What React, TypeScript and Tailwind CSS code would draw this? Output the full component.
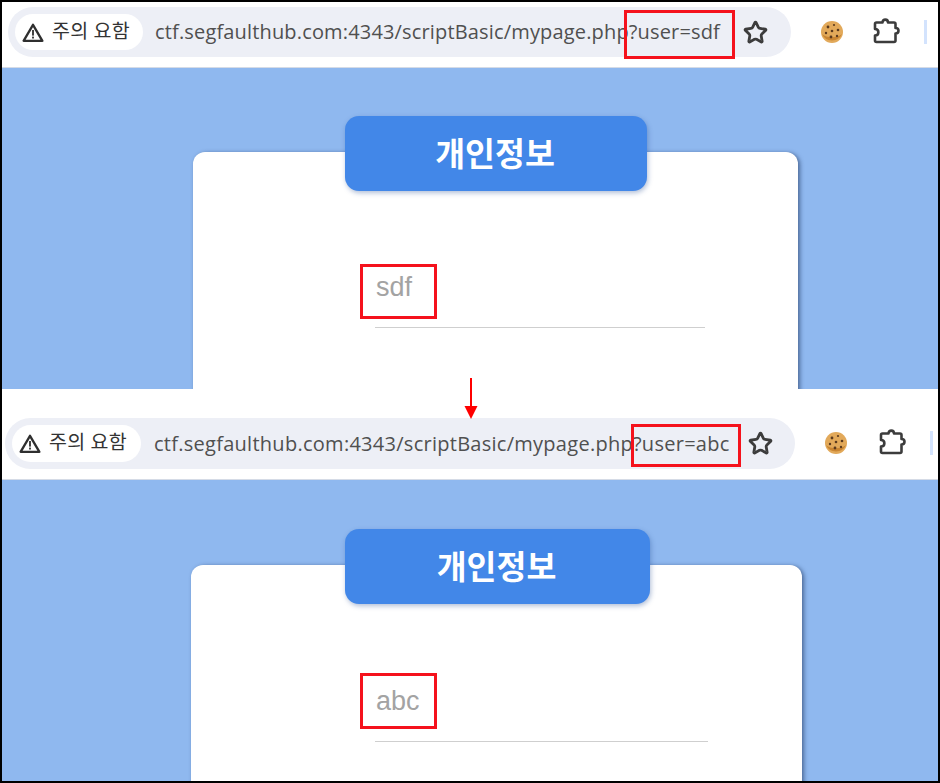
import { Star } from "lucide-react";

const sans = "font-['Noto_Sans','Noto_Sans_CJK_KR',sans-serif]";

function WarningIcon() {
  return (
    <svg width="22" height="19" viewBox="0 0 22 19" className="shrink-0">
      <path d="M11 1.8 L20.4 17.8 H1.6 Z" fill="none" stroke="#2f2f2f" strokeWidth="2.3" strokeLinejoin="round" />
      <rect x="10.1" y="7" width="1.8" height="5.6" fill="#2f2f2f" />
      <rect x="10.1" y="13.6" width="1.8" height="1.9" fill="#2f2f2f" />
    </svg>
  );
}

function Cookie() {
  return (
    <svg width="24" height="24" viewBox="0 0 24 24">
      <circle cx="12" cy="12" r="11" fill="#e2a95a" />
      <path d="M2 14a11 11 0 0 0 20 0 13 9 0 0 1-20 0Z" fill="#c98532" />
      <circle cx="8" cy="7" r="1.4" fill="#5b3a1e" />
      <circle cx="14" cy="5" r="1.1" fill="#5b3a1e" />
      <circle cx="18" cy="10" r="1.3" fill="#5b3a1e" />
      <circle cx="12" cy="11" r="1.3" fill="#5b3a1e" />
      <circle cx="6" cy="13" r="1.2" fill="#5b3a1e" />
      <circle cx="11" cy="17" r="1.4" fill="#5b3a1e" />
      <circle cx="17" cy="16" r="1.2" fill="#5b3a1e" />
    </svg>
  );
}

function PuzzleIcon() {
  return (
    <svg width="28" height="26" viewBox="0 0 28 26" fill="none">
      <path
        d="M3.5 4.5 H9.5 C9.5 0.6 15 0.6 15 4.5 H21 Q22.5 4.5 22.5 6 V10 C26.5 10 26.5 15.5 22.5 15.5 V22.5 Q22.5 24 21 24 H3.5 Q2 24 2 22.5 V17.5 C6.5 17.5 6.5 11 2 11 V6 Q2 4.5 3.5 4.5 Z"
        stroke="#3c3c3c"
        strokeWidth="2.6"
        strokeLinejoin="round"
      />
    </svg>
  );
}

function UpperToolbar() {
  return (
    <div className="h-[66px] shrink-0 bg-white border-b border-[#d5dbe6] flex items-start pl-[6px] pt-[5px]">
      <div className="w-[783px] h-[50px] rounded-full bg-[#edeff6] flex items-center pl-[7px] shrink-0">
        <div className="w-[128px] h-[36px] rounded-full bg-white flex items-center pl-[7px] gap-[8px] shrink-0">
          <WarningIcon />
          <span className={`${sans} text-[19.5px] leading-none text-[#333] whitespace-nowrap mb-[3px] tracking-[0.2px]`}>주의 요함</span>
        </div>
        <span className="ml-[12px] font-['Open_Sans',sans-serif] text-[20px] tracking-[0.16px] text-[#505050] whitespace-nowrap">
          ctf.segfaulthub.com:4343/scriptBasic/mypage.php?user=sdf
        </span>
        <Star className="ml-auto mr-[23px] text-[#3c3c3c]" size={25} strokeWidth={2.7} />
      </div>
      <div className="ml-[29px] mt-[13px] shrink-0"><Cookie /></div>
      <div className="ml-[29px] mt-[11px] shrink-0"><PuzzleIcon /></div>
      <div className="ml-[23px] mt-[13px] w-[3px] h-[24px] bg-[#d3e3fd] shrink-0" />
    </div>
  );
}

function LowerToolbar() {
  return (
    <div className="h-[91px] shrink-0 bg-white border-b border-[#d5dbe6] flex items-start pl-[3px] pt-[29px]">
      <div className="w-[790px] h-[51px] rounded-full bg-[#edeff6] flex items-center pl-[7px] shrink-0">
        <div className="w-[129px] h-[37px] rounded-full bg-white flex items-center pl-[7px] gap-[8px] shrink-0">
          <WarningIcon />
          <span className={`${sans} text-[19.5px] leading-none text-[#333] whitespace-nowrap mb-[3px] tracking-[0.2px]`}>주의 요함</span>
        </div>
        <span className="ml-[13px] font-['Open_Sans',sans-serif] text-[20px] tracking-[0.27px] text-[#505050] whitespace-nowrap">
          ctf.segfaulthub.com:4343/scriptBasic/mypage.php?user=abc
        </span>
        <Star className="ml-auto mr-[22px] text-[#3c3c3c]" size={25} strokeWidth={2.7} />
      </div>
      <div className="ml-[29px] mt-[13px] shrink-0"><Cookie /></div>
      <div className="ml-[31px] mt-[11px] shrink-0"><PuzzleIcon /></div>
      <div className="ml-[23px] mt-[13px] w-[3px] h-[24px] bg-[#d3e3fd] shrink-0" />
    </div>
  );
}

function Title({ className }: { className: string }) {
  return (
    <div
      className={`${className} h-[75px] rounded-[14px] bg-[#4287e8] shadow-[1px_2px_5px_rgba(30,70,140,0.35)] flex items-center justify-center pt-[2px] pr-[2px] relative z-10 ${sans} text-[32.5px] font-bold text-white`}
    >
      개인정보
    </div>
  );
}

export default function App() {
  return (
    <div className="relative w-[940px] h-[783px] border-2 border-black bg-white overflow-hidden flex flex-col">
      {/* upper capture */}
      <section className="h-[387px] shrink-0 flex flex-col overflow-hidden">
        <UpperToolbar />
        <div className="flex-1 bg-[#8fb8ef] pt-[48px]">
          <div className="ml-[343px]"><Title className="w-[302px]" /></div>
          <div className="ml-[191px] -mt-[39px] w-[605px] h-[300px] bg-white rounded-[12px] shadow-[2px_1px_4px_rgba(20,40,80,0.55)] pt-[113px] pl-[182px]">
            <div className="w-[330px] h-[63px] pl-[1px] border-b border-[#cfcfcf] font-['Liberation_Sans',sans-serif] text-[27px] leading-[45px] text-[#a3a3a3]">sdf</div>
          </div>
        </div>
      </section>
      {/* lower capture */}
      <section className="flex-1 min-h-0 flex flex-col overflow-hidden">
        <LowerToolbar />
        <div className="flex-1 bg-[#8fb8ef] pt-[49px]">
          <div className="ml-[343px]"><Title className="w-[305px]" /></div>
          <div className="ml-[189px] -mt-[39px] w-[611px] h-[300px] bg-white rounded-[12px] shadow-[2px_1px_4px_rgba(20,40,80,0.55)] pt-[112px] pl-[184px]">
            <div className="w-[333px] h-[65px] pl-[1px] border-b border-[#cfcfcf] font-['Liberation_Sans',sans-serif] text-[27px] leading-[49px] text-[#a3a3a3]">abc</div>
          </div>
        </div>
      </section>

      {/* annotations */}
      <div className="absolute left-[622px] top-[8px] w-[111px] h-[49px] border-[3px] border-[#f5121c]" />
      <div className="absolute left-[358px] top-[262px] w-[77px] h-[55px] border-[3px] border-[#f5121c]" />
      <div className="absolute left-[629px] top-[422px] w-[110px] h-[43px] border-[3px] border-[#f5121c]" />
      <div className="absolute left-[358px] top-[671px] w-[77px] h-[56px] border-[3px] border-[#f5121c]" />
      <svg className="absolute left-[462px] top-[376px]" width="14" height="41" viewBox="0 0 14 41">
        <rect x="6" y="0" width="2" height="30" fill="#f00" />
        <path d="M0.5 28 H13.5 L7 41 Z" fill="#f00" />
      </svg>
    </div>
  );
}
